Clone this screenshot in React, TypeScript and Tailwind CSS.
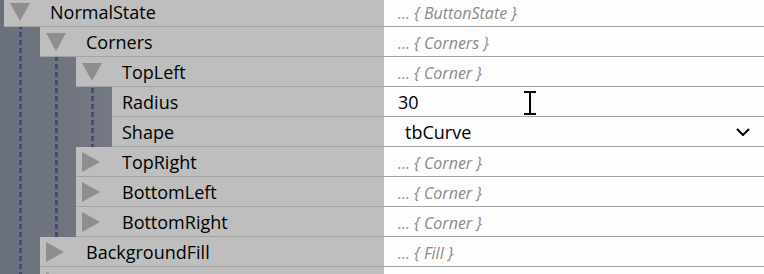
import React from "react";

type Row = {
  label: string;
  level: number;
  kind: "open" | "closed" | "leaf";
  value?: string;
  hint?: boolean;
  select?: boolean;
  caret?: boolean;
};

const rows: Row[] = [
  { label: "NormalState", level: 0, kind: "open", value: "... { ButtonState }", hint: true },
  { label: "Corners", level: 1, kind: "open", value: "... { Corners }", hint: true },
  { label: "TopLeft", level: 2, kind: "open", value: "... { Corner }", hint: true },
  { label: "Radius", level: 3, kind: "leaf", value: "30", caret: true },
  { label: "Shape", level: 3, kind: "leaf", value: "tbCurve", select: true },
  { label: "TopRight", level: 2, kind: "closed", value: "... { Corner }", hint: true },
  { label: "BottomLeft", level: 2, kind: "closed", value: "... { Corner }", hint: true },
  { label: "BottomRight", level: 2, kind: "closed", value: "... { Corner }", hint: true },
  { label: "BackgroundFill", level: 1, kind: "closed", value: "... { Fill }", hint: true },
  { label: "", level: 1, kind: "closed", value: "" },
];

function Arrow({ open }: { open: boolean }) {
  return open ? (
    <svg width="20" height="18" viewBox="0 0 20 18" className="shrink-0">
      <polygon points="0,0 20,0 10,18" fill="#8e8e8e" />
    </svg>
  ) : (
    <svg width="18" height="20" viewBox="0 0 18 20" className="shrink-0">
      <polygon points="0,0 18,10 0,20" fill="#8e8e8e" />
    </svg>
  );
}

function Guide() {
  return (
    <div className="w-[36px] shrink-0 flex">
      <div className="w-[15px]" />
      <div className="w-[3px] bg-fixed bg-[repeating-linear-gradient(to_bottom,#464a78_0px,#464a78_5px,transparent_5px,transparent_8px)]" />
    </div>
  );
}

function TreeRow({ row }: { row: Row }) {
  const guides = Array.from({ length: row.level });
  return (
    <div className="flex h-[30px]">
      <div className="w-[384px] shrink-0 flex pl-[4px]">
        {guides.map((_, i) => (
          <Guide key={i} />
        ))}
        <div className="flex-1 flex items-center bg-[#bebebe] border-b border-[#a3a3a3] h-full">
          {row.kind === "leaf" ? (
            <span className="pl-[10px] pt-[2px]">{row.label}</span>
          ) : (
            <>
              <div className="w-[46px] shrink-0 flex items-center pl-[6px]">
                <Arrow open={row.kind === "open"} />
              </div>
              <span className="pt-[2px]">{row.label}</span>
            </>
          )}
        </div>
      </div>
      <div className="flex-1 flex items-center bg-[#fdfdfd] border-b border-[#a3a3a3] pl-[14px] pr-[14px]">
        {row.hint && (
          <span className="italic text-[16px] text-[#8a8a8a] pt-[2px]">{row.value}</span>
        )}
        {row.caret && (
          <>
            <span className="text-black pt-[2px]">{row.value}</span>
            <svg width="14" height="24" viewBox="0 0 14 24" className="ml-[104px] mt-[2px]">
              <path d="M1 1 H13 M7 1 V23 M1 23 H13" stroke="#000" strokeWidth="2" fill="none" />
            </svg>
          </>
        )}
        {row.select && (
          <div className="flex-1 flex items-center pl-[7px]">
            <span className="flex-1 text-black pt-[2px]">{row.value}</span>
            <svg width="14" height="8" viewBox="0 0 14 8">
              <path d="M1 1 L7 7 L13 1" stroke="#000" strokeWidth="2" fill="none" />
            </svg>
          </div>
        )}
      </div>
    </div>
  );
}

export default function App() {
  return (
    <div className="w-[764px] h-[274px] overflow-hidden bg-[linear-gradient(to_right,#6a707c,#85888e_40%,#9a9a9a)] font-['Open_Sans',sans-serif] text-[18px] text-black">
      <div className="-mt-[3px]">
        {rows.map((r, i) => (
          <TreeRow key={i} row={r} />
        ))}
      </div>
    </div>
  );
}
